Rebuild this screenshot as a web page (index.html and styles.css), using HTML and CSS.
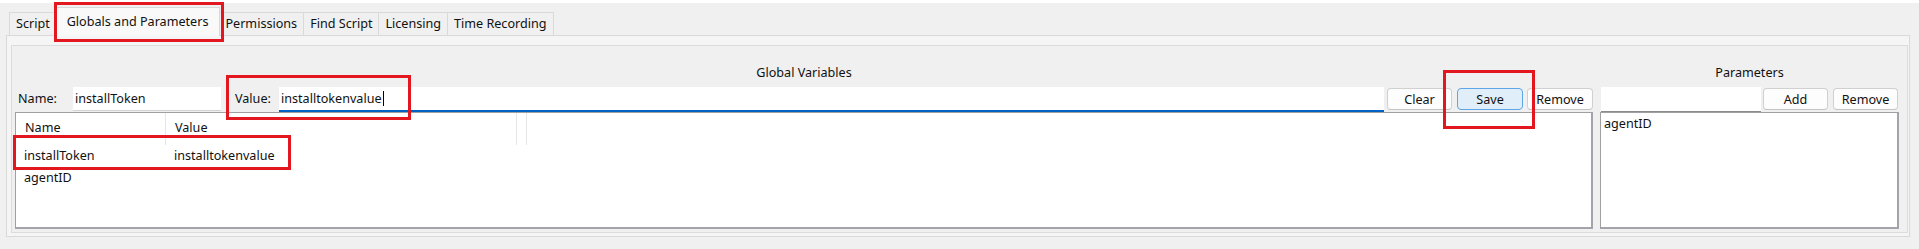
FILE: index.html
```html
<!DOCTYPE html>
<html>
<head>
<meta charset="utf-8">
<link rel="stylesheet" href="styles.css">
</head>
<body>
<div class="topstrip"></div>
<div class="tabbar">
  <div class="tab first">Script</div>
  <div class="tab active">Globals and Parameters</div>
  <div class="tab">Permissions</div>
  <div class="tab">Find Script</div>
  <div class="tab">Licensing</div>
  <div class="tab">Time Recording</div>
</div>
<div class="pane">
  <div class="group">
    <div class="col left">
      <div class="title">Global Variables</div>
      <div class="inputrow">
        <div class="lbl lbl-name">Name:</div>
        <div class="input input-name">installToken</div>
        <div class="lbl lbl-value">Value:</div>
        <div class="input input-value">installtokenvalue<span class="caret"></span></div>
        <button class="btn btn-clear">Clear</button>
        <button class="btn btn-save">Save</button>
        <button class="btn btn-remove">Remove</button>
      </div>
      <div class="table">
        <div class="thead">
          <div class="th c1">Name</div>
          <div class="th c2">Value</div>
          <div class="th c3"></div>
        </div>
        <div class="tr">
          <div class="td c1">installToken</div>
          <div class="td c2">installtokenvalue</div>
        </div>
        <div class="tr">
          <div class="td c1">agentID</div>
        </div>
      </div>
    </div>
    <div class="col right">
      <div class="title">Parameters</div>
      <div class="inputrow">
        <div class="input input-param"></div>
        <button class="btn btn-add">Add</button>
        <button class="btn btn-premove">Remove</button>
      </div>
      <div class="list">
        <div class="item">agentID</div>
      </div>
    </div>
  </div>
</div>
<div class="mark mark-tab"></div>
<div class="mark mark-value"></div>
<div class="mark mark-save"></div>
<div class="mark mark-row"></div>
</body>
</html>
```
FILE: styles.css
```css
* { box-sizing: border-box; }
html, body { margin: 0; padding: 0; }
body {
  background: #f0f0f0;
  font-family: "Noto Sans", "Open Sans", sans-serif;
  font-size: 12.6px;
  color: #111;
  width: 1919px;
  height: 249px;
  overflow: hidden;
  position: relative;
}
.topstrip { height: 3px; background: #fff; }
.tabbar {
  display: flex;
  align-items: flex-end;
  height: 32px;
  padding-left: 9px;
  position: relative;
  z-index: 2;
}
.tab {
  height: 23px;
  line-height: 21px;
  padding: 0 6px;
  border: 1px solid #d9d9d9;
  border-bottom: none;
  border-left: none;
  background: #f0f0f0;
  white-space: nowrap;
}
.tab.first { border-left: 1px solid #d9d9d9; padding: 0 5px 0 6px; }
.tab.active {
  height: 29px;
  line-height: 27px;
  margin: 0 -1px -1px -1px;
  padding: 0 11px;
  background: #f9f9f9;
  border-left: 1px solid #d9d9d9;
  position: relative;
  z-index: 3;
}
.pane {
  margin: 0 9px 0 6px;
  border: 1px solid #d9d9d9;
  background: #f5f5f5;
  padding: 9px 1px 3px 4px;
}
.group {
  display: flex;
  gap: 7px;
  border: 1px solid #dcdcdc;
  background: #f0f0f0;
  padding: 0 8px 3px 3px;
}
.col { display: flex; flex-direction: column; }
.col.left { flex: 1; }
.col.right { width: 299px; }
.title {
  height: 41px;
  padding-top: 19px;
  line-height: 16px;
  text-align: center;
}
.inputrow {
  display: flex;
  align-items: flex-start;
  height: 25px;
}
.lbl { line-height: 24px; white-space: nowrap; }
.lbl-name { width: 58px; padding-left: 3px; }
.lbl-value { width: 44px; margin-left: 14px; }
.input {
  height: 24px;
  background: #fff;
  line-height: 23px;
  padding-left: 2px;
  border-bottom: 1px solid #d2d2d2;
  white-space: nowrap;
  overflow: hidden;
}
.input-name { width: 148px; }
.input-value {
  flex: 1;
  height: 25px;
  border-bottom: 2px solid #0063c4;
}
.input-param {
  width: 160px;
  margin-left: 1px;
  height: 25px;
  border-bottom: 1px solid #8c8c8c;
}
.caret {
  display: inline-block;
  width: 1px;
  height: 15px;
  background: #000;
  vertical-align: -3px;
  margin-left: 1px;
}
.btn {
  height: 22px;
  margin-top: 1px;
  padding: 0;
  font: inherit;
  color: #111;
  line-height: 19px;
  background: #fdfdfd;
  border: 1px solid #d0d0d0;
  border-bottom-color: #c4c4c4;
  border-radius: 4px;
  white-space: nowrap;
  overflow: hidden;
  text-align: center;
}
.btn-clear { width: 65px; margin-left: 3px; }
.btn-save {
  width: 66px;
  margin-left: 5px;
  background: #e0eef9;
  border-color: #5ea6e6;
}
.btn-remove { width: 66px; margin-left: 4px; }
.btn-add { width: 65px; margin-left: 2px; }
.btn-premove { width: 65px; margin-left: 5px; }
.table, .list {
  height: 117px;
  background: #fff;
  border-top: 1px solid #a0a0a0;
  border-left: 1px solid #a0a0a0;
  border-right: 2px solid #a3a3aa;
  border-bottom: 2px solid #a3a3aa;
}
.thead { display: flex; height: 32px; }
.th {
  padding: 7px 0 0 9px;
  line-height: 16px;
  border-right: 1px solid #e6e6e6;
}
.c1 { width: 150px; }
.c2 { width: 351px; }
.tr { display: flex; height: 22px; line-height: 22px; }
.td { padding-left: 8px; white-space: nowrap; }
.list { padding: 3px 0 0 3px; }
.item { line-height: 16px; }
.mark {
  position: absolute;
  border: 3px solid #e3171f;
  z-index: 10;
}
.mark-tab { left: 54px; top: 2px; width: 170px; height: 40px; }
.mark-value { left: 226px; top: 75px; width: 185px; height: 45px; }
.mark-save { left: 1443px; top: 70px; width: 92px; height: 59px; }
.mark-row { left: 13px; top: 135px; width: 278px; height: 35px; }
```
